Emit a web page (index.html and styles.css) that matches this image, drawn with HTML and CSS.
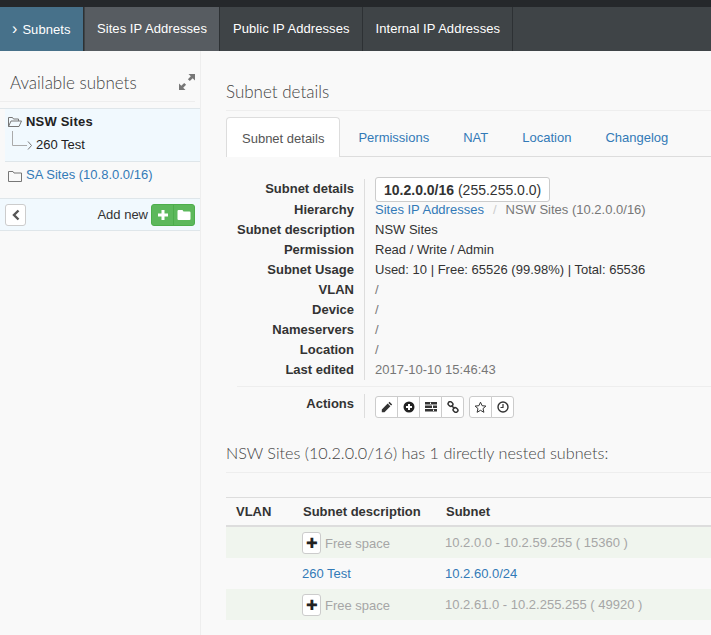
FILE: index.html
```html
<!DOCTYPE html>
<html lang="en">
<head>
    <meta charset="UTF-8">
    <meta name="viewport" content="width=device-width, initial-scale=1.0">
    <title>Subnet details</title>
    <link rel="stylesheet" href="styles.css">
</head>
<body>
    <div class="topbar"></div>
    <nav class="mainnav">
        <a href="#" class="nav-link active"><span class="nav-arrow">&rsaquo;</span> Subnets</a>
        <a href="#" class="nav-link hover">Sites IP Addresses</a>
        <a href="#" class="nav-link">Public IP Addresses</a>
        <a href="#" class="nav-link">Internal IP Addresses</a>
    </nav>

    <div class="page">
        <aside class="sidebar">
            <div class="side-head">
                <h4>Available subnets</h4>
                <svg class="expand" width="16" height="16" viewBox="0 0 16 16">
                    <path fill="#777" d="M9.5 0H16v6.500L13.700 4.200 10.800 7.100 8.900 5.200 11.800 2.300zM6.500 16H0V9.500l2.300 2.300 2.900-2.900 1.900 1.900-2.900 2.900z"/>
                </svg>
            </div>
            <ul class="tree">
                <li class="tree-open">
                    <div class="tree-folder">
                        <svg width="14" height="12" viewBox="0 0 14 12"><path fill="none" stroke="#777" d="M.5 10.500V1.500h4l1 1.500h5v2M.5 10.500l2.500-5.500h10.500l-2.500 5.500z"/></svg>
                        <b>NSW Sites</b>
                    </div>
                    <div class="tree-child">
                        <svg width="20" height="20" viewBox="0 0 20 20"><path fill="none" stroke="#aaa" d="M.5 1v14.500H15"/><path fill="none" stroke="#777" d="M16 11.500l3.500 4-3.500 4"/></svg>
                        <span>260 Test</span>
                    </div>
                </li>
                <li class="tree-closed">
                    <svg width="14" height="12" viewBox="0 0 14 12"><path fill="none" stroke="#777" d="M.5 11.500V1.500h4.500l1 1.500h7.500v8.500z"/></svg>
                    <a href="#">SA Sites (10.8.0.0/16)</a>
                </li>
            </ul>
            <div class="side-foot">
                <button class="btn btn-back">
                    <svg width="8" height="12" viewBox="0 0 8 12"><path fill="none" stroke="#555" stroke-width="2.400" d="M6.500 1.500L2 6l4.500 4.500"/></svg>
                </button>
                <span class="add-label">Add new</span>
                <div class="btn-green">
                    <span>
                        <svg width="12" height="12" viewBox="0 0 12 12"><path fill="#fff" d="M4.500 1h3v3.500H11v3H7.500V11h-3V7.500H1v-3h3.500z"/></svg>
                    </span>
                    <span>
                        <svg width="14" height="12" viewBox="0 0 14 12"><path fill="#fff" d="M1.500 1h4l1 1.500h6a1 1 0 0 1 1 1v6.500a1 1 0 0 1-1 1h-11a1 1 0 0 1-1-1V2a1 1 0 0 1 1-1z"/></svg>
                    </span>
                </div>
            </div>
        </aside>

        <main class="content">
            <h4 class="section-title">Subnet details</h4>

            <ul class="tabs">
                <li class="tab active">Subnet details</li>
                <li class="tab">Permissions</li>
                <li class="tab">NAT</li>
                <li class="tab">Location</li>
                <li class="tab">Changelog</li>
            </ul>

            <div class="details">
                <div class="detail-row first">
                    <div class="label">Subnet details</div>
                    <div class="value"><span class="subnet-box"><b>10.2.0.0/16</b> (255.255.0.0)</span></div>
                </div>
                <div class="detail-row">
                    <div class="label">Hierarchy</div>
                    <div class="value"><a href="#">Sites IP Addresses</a><span class="crumb-sep">/</span><span class="crumb">NSW Sites (10.2.0.0/16)</span></div>
                </div>
                <div class="detail-row">
                    <div class="label">Subnet description</div>
                    <div class="value">NSW Sites</div>
                </div>
                <div class="detail-row">
                    <div class="label">Permission</div>
                    <div class="value">Read / Write / Admin</div>
                </div>
                <div class="detail-row">
                    <div class="label">Subnet Usage</div>
                    <div class="value">Used: 10 | Free: 65526 (99.98%) | Total: 65536</div>
                </div>
                <div class="detail-row">
                    <div class="label">VLAN</div>
                    <div class="value muted">/</div>
                </div>
                <div class="detail-row">
                    <div class="label">Device</div>
                    <div class="value muted">/</div>
                </div>
                <div class="detail-row">
                    <div class="label">Nameservers</div>
                    <div class="value muted">/</div>
                </div>
                <div class="detail-row">
                    <div class="label">Location</div>
                    <div class="value muted">/</div>
                </div>
                <div class="detail-row">
                    <div class="label">Last edited</div>
                    <div class="value muted">2017-10-10 15:46:43</div>
                </div>
            </div>

            <div class="actions-row">
                <div class="label">Actions</div>
                <div class="value actions">
                    <div class="btn-group">
                        <button class="btn">
                            <svg width="12" height="12" viewBox="0 0 12 12"><path fill="#333" d="M8.500.8l2.700 2.700-1.100 1.100-2.700-2.700zM6.700 2.600l2.700 2.700-5.900 5.900H.8V8.500z"/></svg>
                        </button>
                        <button class="btn">
                            <svg width="12" height="12" viewBox="0 0 12 12"><path fill="#222" fill-rule="evenodd" d="M6 .5a5.500 5.500 0 1 1 0 11 5.500 5.500 0 0 1 0-11zM5 3v2H3v2h2v2h2V7h2V5H7V3z"/></svg>
                        </button>
                        <button class="btn">
                            <svg width="14" height="12" viewBox="0 0 14 12"><path fill="#333" d="M1 1h12v2.500H1zM1 4.500h7v2.500H1zM9 4.500h4v2.500H9zM1 8h12v2.500H1z"/><path fill="#fff" d="M6 1.500h1V3H6zM9 8.500h1V10H9z"/></svg>
                        </button>
                        <button class="btn">
                            <svg width="12" height="12" viewBox="0 0 12 12"><g fill="none" stroke="#333" stroke-width="1.500"><rect x="1" y="1" width="5" height="4" rx="2" transform="rotate(40 3.500 3)"/><rect x="6" y="7" width="5" height="4" rx="2" transform="rotate(40 8.500 9)"/><path d="M4.500 4.500l3 3"/></g></svg>
                        </button>
                    </div>
                    <div class="btn-group">
                        <button class="btn">
                            <svg width="13" height="13" viewBox="0 0 13 13"><path fill="none" stroke="#333" d="M6.500 1.200l1.600 3.500 3.800.4-2.900 2.500.9 3.700-3.400-2-3.400 2 .9-3.700L1.100 5.100l3.800-.4z"/></svg>
                        </button>
                        <button class="btn">
                            <svg width="12" height="12" viewBox="0 0 12 12"><circle cx="6" cy="6" r="5" fill="none" stroke="#333" stroke-width="1.400"/><path fill="none" stroke="#333" stroke-width="1.200" d="M6 3v3.500H3.500"/></svg>
                        </button>
                    </div>
                </div>
            </div>

            <h4 class="nested-title">NSW Sites (10.2.0.0/16) has 1 directly nested subnets:</h4>

            <table class="subnets">
                <thead>
                    <tr>
                        <th class="col-vlan">VLAN</th>
                        <th class="col-desc">Subnet description</th>
                        <th>Subnet</th>
                    </tr>
                </thead>
                <tbody>
                    <tr class="free">
                        <td></td>
                        <td><button class="btn btn-plus">&#10010;</button><span class="free-label">Free space</span></td>
                        <td>10.2.0.0 - 10.2.59.255 ( 15360 )</td>
                    </tr>
                    <tr>
                        <td></td>
                        <td><a href="#">260 Test</a></td>
                        <td><a href="#">10.2.60.0/24</a></td>
                    </tr>
                    <tr class="free">
                        <td></td>
                        <td><button class="btn btn-plus">&#10010;</button><span class="free-label">Free space</span></td>
                        <td>10.2.61.0 - 10.2.255.255 ( 49920 )</td>
                    </tr>
                </tbody>
            </table>
        </main>
    </div>
</body>
</html>
```

FILE: styles.css
```css
/* General Page Styling */
html, body {
    height: 100%;
}

body {
    margin: 0;
    background: #f9f9f9;
    font-family: "Liberation Sans", Arial, sans-serif;
    font-size: 13px;
    color: #333;
    overflow: hidden;
}

a {
    color: #337ab7;
    text-decoration: none;
}

ul {
    list-style: none;
    margin: 0;
    padding: 0;
}

/* Top navigation */
.topbar {
    height: 7px;
    background: #25282b;
}

.mainnav {
    display: flex;
    height: 44px;
    background: #3f4447;
}

.nav-link {
    display: flex;
    align-items: center;
    padding: 0 12px 1px 12px;
    color: #fff;
    font-size: 13px;
    letter-spacing: 0.06px;
    border-right: 1px solid #2d3134;
    margin-right: 1px;
}

.nav-link.active {
    background: #47718a;
    padding: 0 12px;
    width: 59px;
}

.nav-link.hover {
    background: #575c61;
}

.nav-arrow {
    font-size: 16px;
    margin-right: 5px;
}

.page {
    display: flex;
    height: 584px;
}

/* Sidebar */
.sidebar {
    width: 200px;
    flex: none;
    border-right: 1px solid #eee;
}

.side-head {
    display: flex;
    justify-content: space-between;
    align-items: center;
    box-sizing: border-box;
    margin-right: 5px;
    height: 51px;
    padding: 12px 0 0 10px;
    border-bottom: 1px solid #eee;
    margin-bottom: 6px;
}

.side-head h4 {
    margin: 0;
    font-family: "Lato", sans-serif;
    font-weight: 300;
    font-size: 17px;
    color: #444;
}

.tree {
    border-top: 1px solid #dfe6ea;
}

.tree-open {
    margin-left: 5px;
    height: 53px;
    background: #f1f9fe;
    border-bottom: 1px solid #dfe6ea;
    padding-top: 4px;
    box-sizing: border-box;
}

.tree-folder {
    display: flex;
    align-items: center;
    gap: 4px;
    height: 17px;
    padding-left: 3px;
    letter-spacing: 0.2px;
    color: #222;
}

.tree-child {
    display: flex;
    align-items: flex-start;
    padding-left: 7px;
    height: 22px;
    color: #222;
}

.tree-child span {
    margin: 7px 0 0 4px;
}

.tree-closed {
    display: flex;
    gap: 4px;
    padding: 5px 0 0 8px;
    height: 36px;
    box-sizing: border-box;
    align-items: flex-start;
}

.tree-closed svg {
    margin-top: 3px;
}

.side-foot {
    display: flex;
    align-items: center;
    height: 33px;
    box-sizing: border-box;
    padding: 0 5px;
    background: #f1f9fe;
    border-top: 1px solid #dfe6ea;
    border-bottom: 1px solid #dfe6ea;
}

.add-label {
    margin-left: auto;
    margin-right: 3px;
}

.btn {
    background: #fff;
    border: 1px solid #ccc;
    padding: 0;
    display: flex;
    align-items: center;
    justify-content: center;
    height: 22px;
    width: 23px;
}

.btn-back {
    width: 21px;
    border-radius: 3px;
}

.btn-green {
    display: flex;
    height: 22px;
    background: #5cb85c;
    border-radius: 3px;
    border: 1px solid #4cae4c;
    box-sizing: border-box;
}

.btn-green span {
    display: flex;
    align-items: center;
    justify-content: center;
    width: 21px;
}

.btn-green span + span {
    width: 20px;
    border-left: 1px solid #4cae4c;
}

/* Main content */
.content {
    flex: 1;
    min-width: 0;
    padding-left: 25px;
    overflow: hidden;
}

.section-title {
    margin: 30px 0 0 0;
    height: 29px;
    font-family: "Lato", sans-serif;
    font-weight: 300;
    font-size: 17px;
    color: #444;
    border-bottom: 1px solid #eee;
}

.tabs {
    display: flex;
    height: 39px;
    margin-top: 6px;
    border-bottom: 1px solid #ddd;
    margin-right: -1px;
}

.tab {
    padding: 0 15px;
    margin-right: 4px;
    line-height: 41px;
    color: #337ab7;
}

.tab.active {
    height: 39px;
    background: #fff;
    color: #555;
    border: 1px solid #ddd;
    border-bottom: none;
    border-radius: 4px 4px 0 0;
    margin-right: 3px;
}

/* Detail rows */
.details {
    margin-top: 22px;
    padding-bottom: 6px;
    border-bottom: 1px solid #eee;
    margin-left: 11px;
}

.detail-row, .actions-row {
    display: flex;
    min-height: 20px;
    line-height: 20px;
}

.detail-row.first {
    height: 21px;
}

.label {
    width: 117px;
    padding-right: 10px;
    text-align: right;
    font-weight: bold;
    white-space: nowrap;
    flex: none;
    border-right: 1px solid #ddd;
    box-sizing: content-box;
}

.value {
    padding-left: 10px;
}

.muted {
    color: #777;
}

.subnet-box {
    display: inline-block;
    height: 25px;
    line-height: 25px;
    margin-top: -2px;
    padding: 0 8px;
    background: #fff;
    border: 1px solid #ccc;
    border-radius: 3px;
    font-size: 14px;
    vertical-align: top;
    box-sizing: border-box;
}

.crumb-sep {
    color: #ccc;
    margin: 0 9px;
}

.crumb {
    color: #777;
}

.actions-row {
    margin: 7px 0 0 11px;
}

.actions-row .label {
    height: 24px;
    line-height: 20px;
}

.actions {
    display: flex;
    gap: 5px;
    padding-top: 2px;
}

.btn-group {
    display: flex;
    height: 22px;
}

.btn-group .btn {
    margin-left: -1px;
}

.btn-group .btn:first-child {
    border-radius: 3px 0 0 3px;
    margin-left: 0;
}

.btn-group .btn:last-child {
    border-radius: 0 3px 3px 0;
}

.nested-title {
    margin: 25px 0 0 0;
    height: 29px;
    font-family: "Lato", sans-serif;
    font-weight: 300;
    font-size: 16.200px;
    color: #444;
    border-bottom: 1px solid #eee;
}

/* Table */
.subnets {
    width: 100%;
    margin-top: 24px;
    border-collapse: collapse;
    border-top: 1px solid #ddd;
}

.subnets th {
    height: 27px;
    text-align: left;
    padding: 0 10px;
    border-bottom: 2px solid #ddd;
}

.col-vlan {
    width: 47px;
}

.col-desc {
    width: 123px;
}

.subnets td {
    height: 31px;
    padding: 0 9px;
    color: #a6a6a6;
}

.free td {
    background: #f0f5ee;
}

.btn-plus {
    display: inline-flex;
    width: 19px;
    height: 22px;
    margin-right: 4px;
    color: #222;
    font-size: 14px;
    border-radius: 3px;
    vertical-align: middle;
}

.free-label {
    color: #a6a6a6;
    vertical-align: middle;
}
```
